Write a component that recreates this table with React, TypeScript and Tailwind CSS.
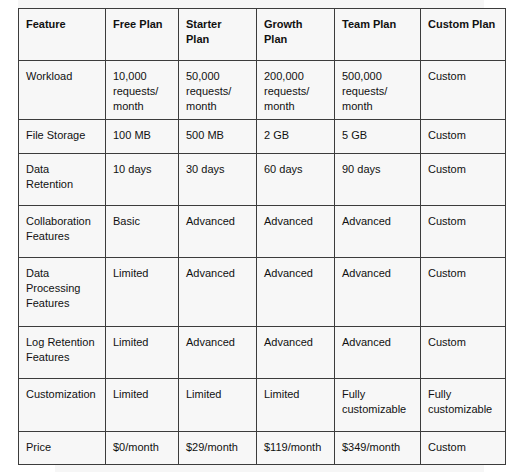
import React from 'react';

type Row = { h: string; cells: string[] };

const header = ['Feature', 'Free Plan', 'Starter Plan', 'Growth Plan', 'Team Plan', 'Custom Plan'];

const rows: Row[] = [
  { h: 'h-[59px]', cells: ['Workload', '10,000 requests/ month', '50,000 requests/ month', '200,000 requests/ month', '500,000 requests/ month', 'Custom'] },
  { h: 'h-[34px]', cells: ['File Storage', '100 MB', '500 MB', '2 GB', '5 GB', 'Custom'] },
  { h: 'h-[52px]', cells: ['Data Retention', '10 days', '30 days', '60 days', '90 days', 'Custom'] },
  { h: 'h-[52px]', cells: ['Collaboration Features', 'Basic', 'Advanced', 'Advanced', 'Advanced', 'Custom'] },
  { h: 'h-[69px]', cells: ['Data Processing Features', 'Limited', 'Advanced', 'Advanced', 'Advanced', 'Custom'] },
  { h: 'h-[52px]', cells: ['Log Retention Features', 'Limited', 'Advanced', 'Advanced', 'Advanced', 'Custom'] },
  { h: 'h-[53px]', cells: ['Customization', 'Limited', 'Limited', 'Limited', 'Fully customizable', 'Fully customizable'] },
  { h: 'h-[33px]', cells: ['Price', '$0/month', '$29/month', '$119/month', '$349/month', 'Custom'] },
];

const cellCls = 'border border-[#3c3c3c] align-top pl-[7px] pr-[9px] pt-[8px] text-left';

const App: React.FC = () => {
  return (
    <div className="w-[512px] h-[472px] bg-white overflow-hidden text-[#111] font-['Liberation_Sans',Arial,sans-serif] text-[11px] leading-[15px]">
      {/* gray strip above the table */}
      <div className="ml-[18px] w-[466px] h-[8px] bg-[#f6f6f6]"></div>

      <table className="ml-[18px] w-[487px] table-fixed border-collapse bg-[#f7f7f7]">
        <colgroup>
          <col className="w-[87px]" />
          <col className="w-[73px]" />
          <col className="w-[78px]" />
          <col className="w-[78px]" />
          <col className="w-[86px]" />
          <col className="w-[85px]" />
        </colgroup>
        <thead>
          <tr className="h-[52px]">
            {header.map(t => (
              <th key={t} className={cellCls + ' font-bold'}>{t}</th>
            ))}
          </tr>
        </thead>
        <tbody>
          {rows.map(r => (
            <tr key={r.cells[0]} className={r.h}>
              {r.cells.map((c, i) => (
                <td key={i} className={cellCls}>{c}</td>
              ))}
            </tr>
          ))}
        </tbody>
      </table>

      {/* gray strip below the table */}
      <div className="ml-[55px] w-[429px] h-[8px] bg-[#f6f6f6]"></div>
    </div>
  );
};

export default App;
